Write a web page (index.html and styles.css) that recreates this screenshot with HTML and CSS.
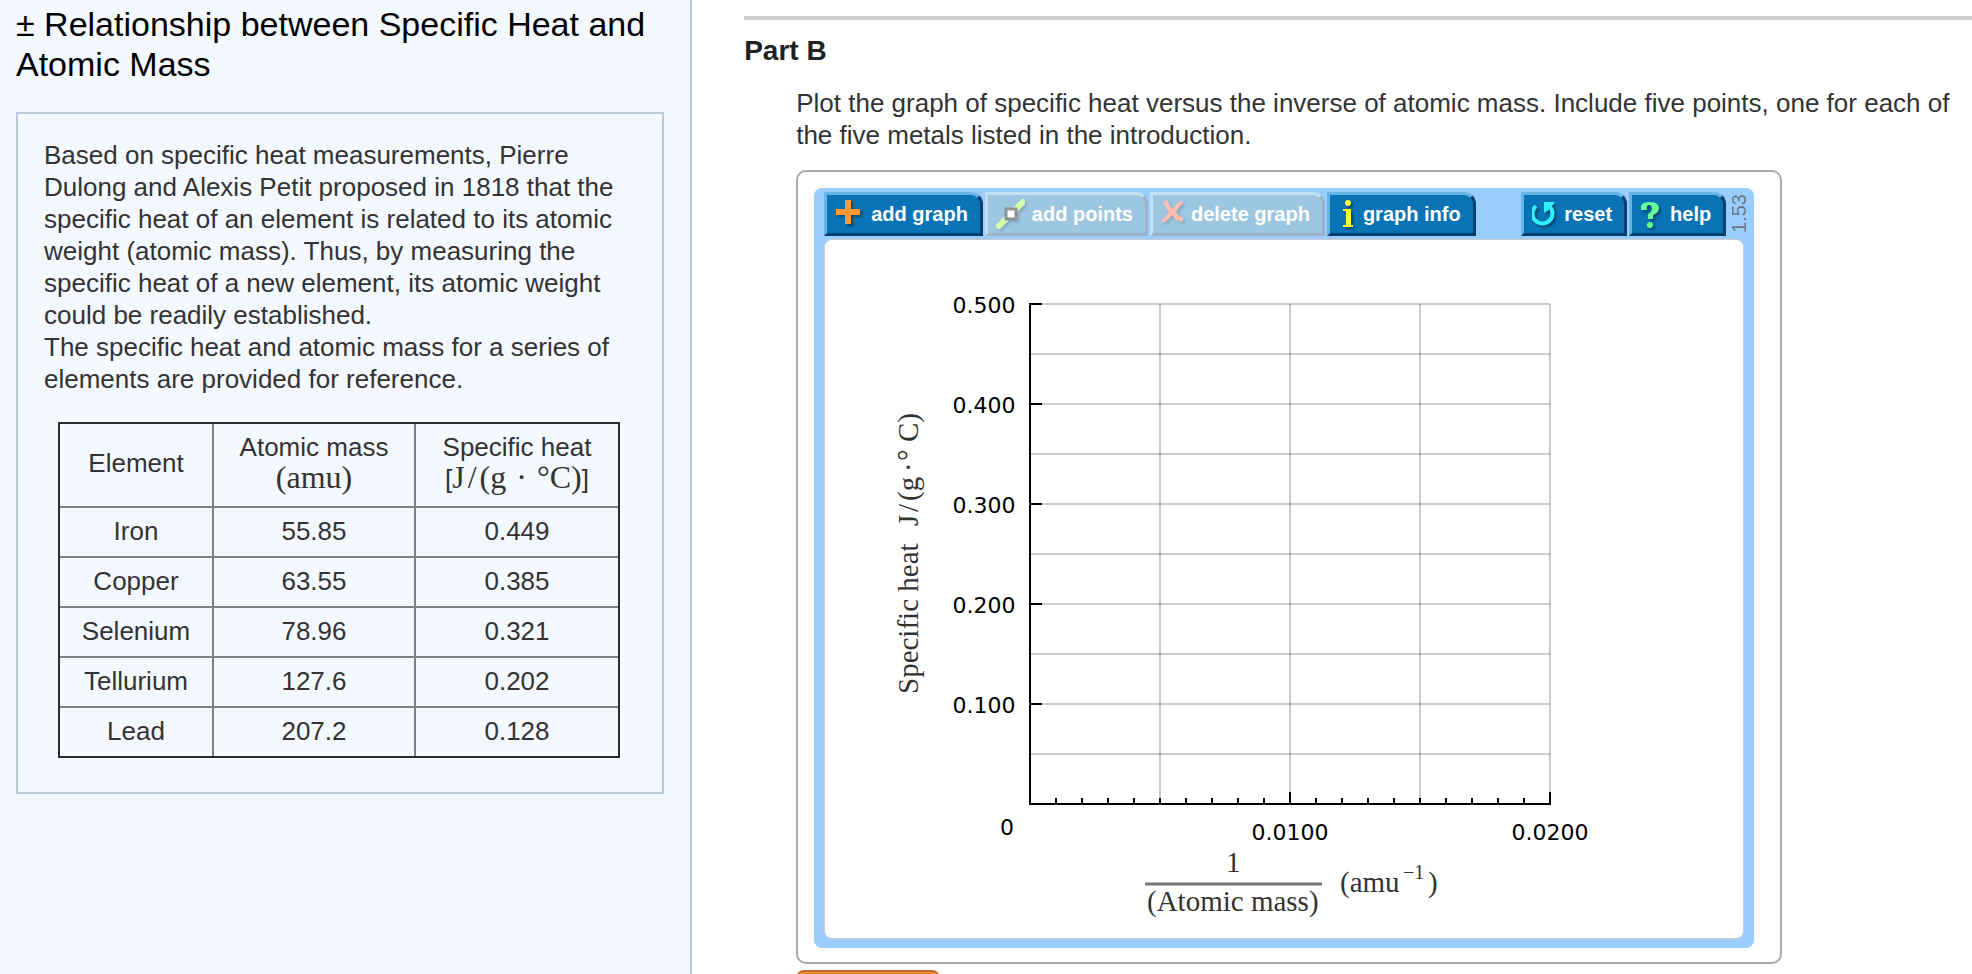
FILE: index.html
```html
<!doctype html>
<html lang="en">
  <head>
    <meta charset="utf-8">
    <meta name="viewport" content="width=device-width, initial-scale=1">

    <title>Relationship between Specific Heat and Atomic Mass</title>

    <link rel="stylesheet" href="styles.css">
  </head>
  <body>
    <div class="layout">
      <aside class="sidebar">
        <h1>± Relationship between Specific Heat and Atomic Mass</h1>

        <div class="intro">
          <p>Based on specific heat measurements, Pierre Dulong and Alexis Petit proposed in 1818 that the specific heat of an element is related to its atomic weight (atomic mass). Thus, by measuring the specific heat of a new element, its atomic weight could be readily established.</p>
          <p>The specific heat and atomic mass for a series of elements are provided for reference.</p>

          <table>
            <thead>
              <tr>
                <th class="col-element">Element</th>
                <th class="col-mass">Atomic mass<br><span class="math">(amu)</span></th>
                <th class="col-heat">Specific heat<br>[<span class="math">J<span class="slash">/</span>(g<span class="dot">·</span>°C)</span>]</th>
              </tr>
            </thead>
            <tbody>
              <tr><td>Iron</td><td>55.85</td><td>0.449</td></tr>
              <tr><td>Copper</td><td>63.55</td><td>0.385</td></tr>
              <tr><td>Selenium</td><td>78.96</td><td>0.321</td></tr>
              <tr><td>Tellurium</td><td>127.6</td><td>0.202</td></tr>
              <tr><td>Lead</td><td>207.2</td><td>0.128</td></tr>
            </tbody>
          </table>
        </div>
      </aside>

      <main class="main">
        <hr>
        <h2>Part B</h2>

        <div class="part">
          <p>Plot the graph of specific heat versus the inverse of atomic mass. Include five points, one for each of the five metals listed in the introduction.</p>

          <div class="widget">
            <div class="grapher">
              <div class="toolbar">
                <button type="button">
                  <svg class="icon" width="29" height="38">
                    <path d="M10 5h6v9h9v6h-9v9h-6v-9H1v-6h9z" fill="#f93"/>
                  </svg>
                  add graph
                </button>
                <button type="button" disabled>
                  <svg class="icon" width="29" height="38">
                    <path d="M3 31L27 7" stroke="#d5ffaa" stroke-width="6" stroke-linecap="round"/>
                    <rect x="10" y="14" width="10" height="10" fill="#fff" stroke="#8f9396" stroke-width="3"/>
                  </svg>
                  add points
                </button>
                <button type="button" disabled>
                  <svg class="icon" width="23" height="38">
                    <path d="M2 8L5 5Q7 5 8 9Q9 12 12 14Q15 8 20 6L22 8Q18 11 15 17Q18 22 23 23L21 27Q15 26 11 20Q8 25 4 27Q1 28 0 26Q5 22 8 17Q5 12 2 8z" fill="#ffbfb0"/>
                  </svg>
                  delete graph
                </button>
                <button type="button">
                  <svg class="icon" width="18" height="38">
                    <circle cx="10" cy="8" r="3" fill="#ff3"/>
                    <path d="M5 14h8v16h2v2H5v-2h3V16H5z" fill="#ff3"/>
                  </svg>
                  graph info
                </button>

                <button type="button" class="push">
                  <svg class="icon" width="25" height="38">
                    <path d="M4 11A10 10 0 1 0 17 11" fill="none" stroke="#3ef" stroke-width="4"/>
                    <path d="M12 7h11l-3 4-3 4-5 3z" fill="#3ef"/>
                  </svg>
                  reset
                </button>
                <button type="button">
                  <svg class="icon" width="23" height="38">
                    <path d="M1 15V11Q2 7 10 7Q19 7 19 13Q19 18 13 20V24H8V19Q12 17 12 14Q12 10 9 10Q6 10 7 15z" fill="#6f9"/>
                    <circle cx="10" cy="30" r="3" fill="#6f9"/>
                  </svg>
                  help
                </button>
                <span class="version">1.53</span>
              </div>

              <div class="canvas">
                <svg viewBox="0 0 918 698" role="img" aria-label="Empty graph of specific heat against inverse atomic mass">
                  <path class="grid" d="M205 64h520M205 114h520M205 164h520M205 214h520M205 264h520M205 314h520M205 364h520M205 414h520M205 464h520M205 514h520"/>
                  <path class="grid" d="M335 64v500M465 64v500M595 64v500M725 64v500"/>
                  <path class="axis" d="M205 63V564H726M205 64h12M205 164h12M205 264h12M205 364h12M205 464h12M465 564v-12M725 564v-12"/>
                  <path class="axis" d="M231 564v-6M257 564v-6M283 564v-6M309 564v-6M335 564v-6M361 564v-6M387 564v-6M413 564v-6M439 564v-6M491 564v-6M517 564v-6M543 564v-6M569 564v-6M595 564v-6M621 564v-6M647 564v-6M673 564v-6M699 564v-6"/>

                  <g class="ticks">
                    <text x="159" y="73">0.500</text>
                    <text x="159" y="173">0.400</text>
                    <text x="159" y="273">0.300</text>
                    <text x="159" y="373">0.200</text>
                    <text x="159" y="473">0.100</text>
                    <text x="182" y="595">0</text>
                    <text x="465" y="600">0.0100</text>
                    <text x="725" y="600">0.0200</text>
                  </g>

                  <g class="label" transform="translate(93 454) rotate(-90)">
                    <text>Specific heat</text>
                    <text x="168">J</text>
                    <text x="182">/</text>
                    <text x="193">(g</text>
                    <text x="222">·</text>
                    <text x="233">°</text>
                    <text x="252">C)</text>
                  </g>

                  <g class="label">
                    <text x="401" y="632">1</text>
                    <path d="M320 644h177" stroke="#777" stroke-width="3"/>
                    <text x="322" y="671">(Atomic mass)</text>
                    <text x="515" y="652">(amu</text>
                    <text class="sup" x="578" y="639">−1</text>
                    <text x="603" y="652">)</text>
                  </g>
                </svg>
              </div>
            </div>
          </div>

          <button type="submit" class="submit" aria-label="Submit"></button>
        </div>
      </main>
    </div>
  </body>
</html>
```

FILE: styles.css
```css
* {
  box-sizing: border-box;
}

body {
  margin: 0;
  background: #fff;
  color: #333;
  font-family: "Liberation Sans", Arial, sans-serif;
  font-size: 26px;
  line-height: 32px;
}
h1,
h2,
p {
  margin: 0;
}
.layout {
  display: flex;
  height: 100vh;
  overflow: hidden;
}

/* introduction */
.sidebar {
  flex: 0 0 35.1%;
  padding: 4px 26px 0 16px;
  background: #f4f8ff;
  border-right: 2px solid #b9cade;
}
h1 {
  margin-bottom: 28px;
  color: #000;
  font-size: 34px;
  font-weight: normal;
  line-height: 40px;
}
.intro {
  padding: 25px 42px 34px 26px;
  border: 2px solid #b9cbdc;
}
table {
  width: 562px;
  max-width: 100%;
  margin: 27px 0 0 14px;
  border: 2px solid #2b2b2b;
  border-spacing: 0;
  text-align: center;
}
th,
td {
  padding: 7px 0 9px;
  border-right: 2px solid #808080;
  border-bottom: 2px solid #808080;
}
th {
  padding-bottom: 11px;
  font-weight: normal;
}
th:last-child,
td:last-child {
  border-right: 0;
}
tbody tr:last-child td {
  border-bottom: 0;
}
.col-element {
  width: 154px;
}
.col-mass {
  width: 202px;
}
.math {
  font-family: "Liberation Serif", "Times New Roman", serif;
  font-size: 32px;
  line-height: 24px;
}
.slash {
  margin: 0 3px;
}
.dot {
  margin: 0 10px;
}

/* question part */
.main {
  flex: 1;
  min-width: 0;
  padding: 16px 0 0 52px;
}
hr {
  height: 4px;
  margin: 0 0 13px;
  border: 0;
  background: #ccc;
}
h2 {
  color: #222;
  font-size: 28px;
  line-height: 36px;
}
.part {
  padding: 18px 16px 0 52px;
}
.widget {
  max-width: 986px;
  margin: 19px 0 6px;
  padding: 16px 26px 14px 16px;
  border: 2px solid #aaa;
  border-radius: 10px;
}
.grapher {
  padding: 4px 4px 9px 10px;
  background: #9cf;
  border-radius: 8px;
}
.toolbar {
  display: flex;
  gap: 2px;
  height: 44px;
  margin-bottom: 3px;
}
.toolbar button {
  display: flex;
  align-items: center;
  gap: 7px;
  padding: 0 12px 1px 8px;
  border: 3px solid;
  border-color: #66b5e5 #083f70 #083f70 #66b5e5;
  border-radius: 0 12px 0 0;
  background: #0874b5;
  color: #fff;
  font-family: inherit;
  font-size: 20px;
  font-weight: bold;
  line-height: 24px;
  white-space: nowrap;
}
.toolbar button:disabled {
  border-color: #c4e2f5 #9db2c6 #9db2c6 #c4e2f5;
  background: #9dc7e1;
}
.toolbar .push {
  margin-left: auto;
}
.icon {
  filter: drop-shadow(2px 2px 1px rgba(0, 0, 0, 0.4));
}
button:disabled .icon {
  filter: drop-shadow(2px 2px 1px rgba(0, 0, 0, 0.15));
}
.version {
  width: 22px;
  color: #6b7680;
  font-size: 20px;
  line-height: 22px;
  text-align: center;
  writing-mode: vertical-rl;
  transform: rotate(180deg);
}
.canvas {
  margin-right: 6px;
  border: 1px solid #ccc;
  border-radius: 8px;
  background: #fff;
}
.canvas svg {
  display: block;
  width: 100%;
}
.grid,
.axis {
  fill: none;
  stroke: #000;
  stroke-width: 2px;
}
.grid {
  stroke-opacity: 0.2;
}
.ticks {
  font-family: "DejaVu Sans", Verdana, sans-serif;
  font-size: 22px;
  text-anchor: middle;
}
.label {
  fill: #333;
  font-family: "Liberation Serif", "Times New Roman", serif;
  font-size: 29px;
}
.sup {
  font-size: 20px;
}
.submit {
  width: 144px;
  height: 44px;
  border: 2px solid #c46c2c;
  border-radius: 8px;
  background: #ea8a35;
}
```
